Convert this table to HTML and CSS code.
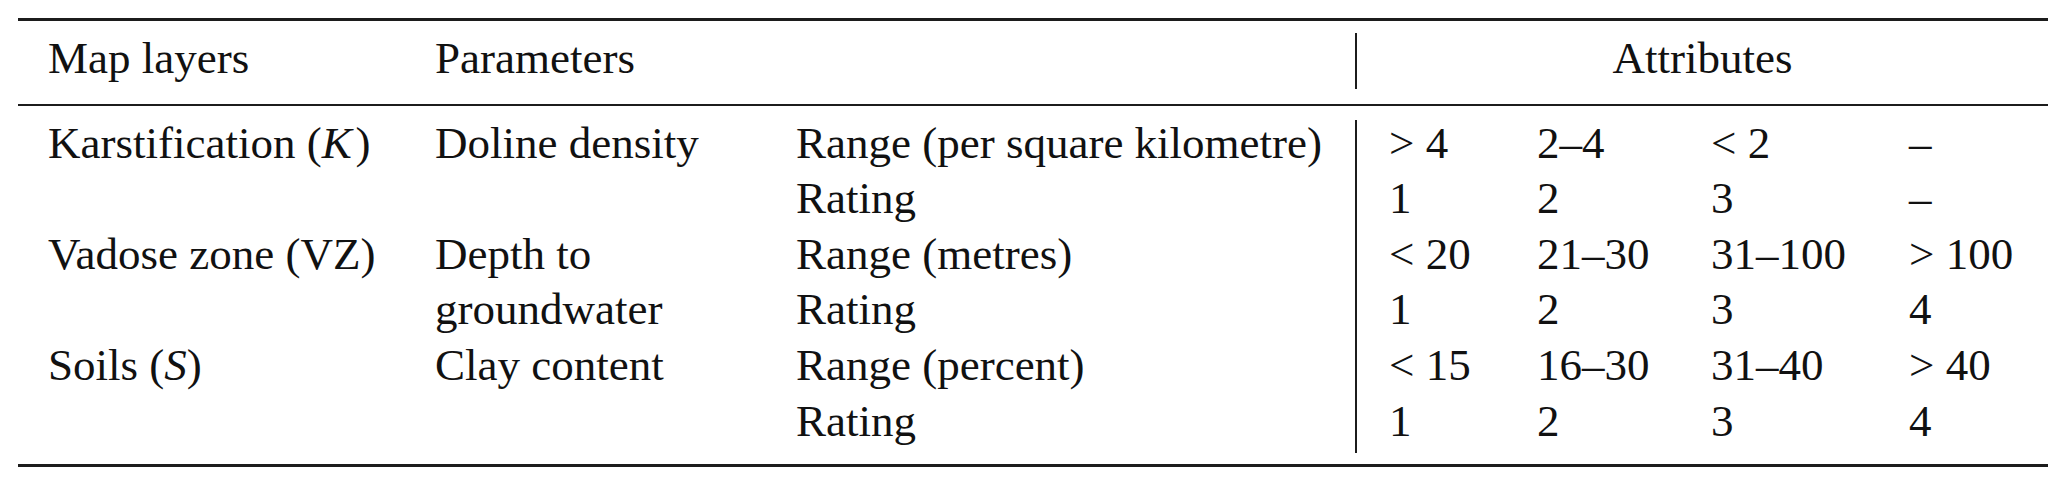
FILE: index.html
```html
<!DOCTYPE html>
<html lang="en">
<head>
<meta charset="utf-8">
<title>Map layers, parameters and attributes</title>
<link rel="stylesheet" href="styles.css">
</head>
<body>
<div class="table">
  <div class="rule rule-heavy"></div>
  <div class="section head">
    <div class="left grid3">
      <div class="cell">Map layers</div>
      <div class="cell">Parameters</div>
      <div class="cell"></div>
    </div>
    <div class="right head-attr">
      <div class="cell">Attributes</div>
    </div>
  </div>
  <div class="rule rule-light"></div>
  <div class="section body">
    <div class="left grid3">
      <div class="cell">Karstification (<i>K</i>&#8202;)</div>
      <div class="cell">Doline density</div>
      <div class="cell">Range (per square kilometre)</div>

      <div class="cell"></div>
      <div class="cell"></div>
      <div class="cell">Rating</div>

      <div class="cell">Vadose zone (VZ)</div>
      <div class="cell">Depth to</div>
      <div class="cell">Range (metres)</div>

      <div class="cell"></div>
      <div class="cell">groundwater</div>
      <div class="cell">Rating</div>

      <div class="cell">Soils (<i>S</i>)</div>
      <div class="cell">Clay content</div>
      <div class="cell">Range (percent)</div>

      <div class="cell"></div>
      <div class="cell"></div>
      <div class="cell">Rating</div>
    </div>
    <div class="right grid4">
      <div class="cell">&gt; 4</div>
      <div class="cell">2&#8211;4</div>
      <div class="cell">&lt; 2</div>
      <div class="cell">&#8211;</div>

      <div class="cell">1</div>
      <div class="cell">2</div>
      <div class="cell">3</div>
      <div class="cell">&#8211;</div>

      <div class="cell">&lt; 20</div>
      <div class="cell">21&#8211;30</div>
      <div class="cell">31&#8211;100</div>
      <div class="cell">&gt; 100</div>

      <div class="cell">1</div>
      <div class="cell">2</div>
      <div class="cell">3</div>
      <div class="cell">4</div>

      <div class="cell">&lt; 15</div>
      <div class="cell">16&#8211;30</div>
      <div class="cell">31&#8211;40</div>
      <div class="cell">&gt; 40</div>

      <div class="cell">1</div>
      <div class="cell">2</div>
      <div class="cell">3</div>
      <div class="cell">4</div>
    </div>
  </div>
  <div class="rule rule-heavy"></div>
</div>
</body>
</html>
```

FILE: styles.css
```css
html, body {
  margin: 0;
  padding: 0;
  background: #ffffff;
}

body {
  font-family: "Liberation Serif", "Times New Roman", serif;
  font-size: 45px;
  color: #111111;
}

.table {
  width: 2030px;
  margin-left: 18px;
  padding-top: 18px;
}

.rule {
  background: #1c1c1c;
}

.rule-heavy {
  height: 3px;
}

.rule-light {
  height: 2px;
}

.section {
  display: flex;
}

.head {
  margin-top: 12px;
  margin-bottom: 15px;
}

.body {
  margin-top: 14px;
  margin-bottom: 11px;
}

.left {
  width: 1337px;
  flex: none;
  box-sizing: border-box;
  padding-left: 30px;
}

.right {
  flex: 1;
  border-left: 2px solid #1c1c1c;
  box-sizing: border-box;
}

.grid3 {
  display: grid;
  grid-template-columns: 387px 361px 1fr;
}

.grid4 {
  display: grid;
  grid-template-columns: 148px 174px 198px 1fr;
  padding-left: 32px;
}

.head-attr {
  text-align: center;
}

.cell {
  line-height: 47.6px;
  height: 47.6px;
  padding-bottom: 8px;
  white-space: nowrap;
}

.head .cell {
  padding-top: 2px;
  padding-bottom: 6px;
}

i {
  font-style: italic;
}
```
